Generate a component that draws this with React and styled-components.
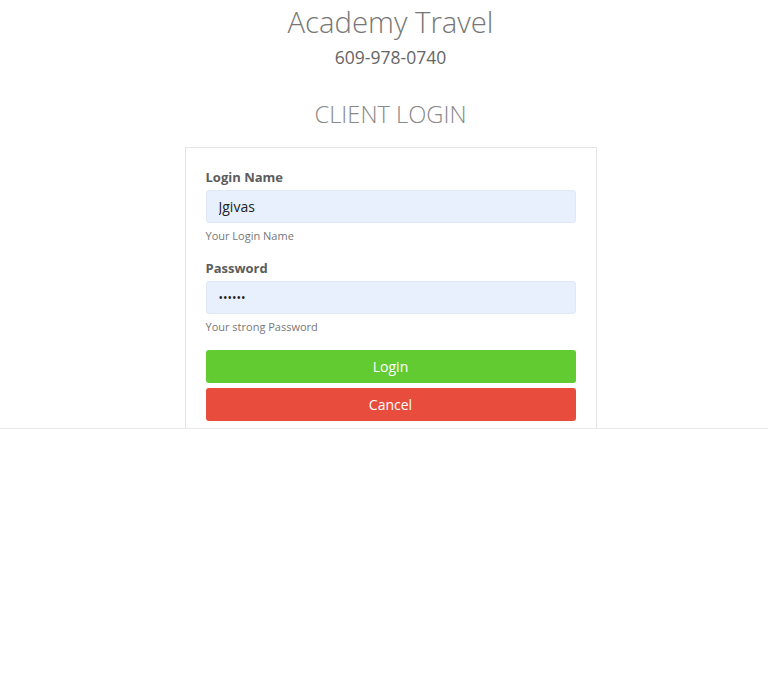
import React from 'react';
import styled, { createGlobalStyle } from 'styled-components';

const GlobalStyle = createGlobalStyle`
  html, body {
    margin: 0;
    padding: 0;
    background: #fff;
    font-family: "Open Sans", "Noto Sans", sans-serif;
  }
`

const Page = styled.div`
  width: 768px;
`

const Main = styled.div`
  height: 428px;
  overflow: hidden;
  border-bottom: 1px solid #e9e9e9;
  padding-left: 13px;
  display: flex;
  flex-direction: column;
  align-items: center;
`

const Title = styled.h1`
  margin: 2px 0 0;
  font-size: 29.3px;
  font-weight: 300;
  line-height: 40px;
  color: #777;
`

const Phone = styled.div`
  font-size: 17.5px;
  line-height: 24px;
  color: #666;
  margin-top: 3px;
`

const Heading = styled.h2`
  margin: 28px 0 0;
  font-size: 23.7px;
  font-weight: 300;
  line-height: 34px;
  color: #888;
`

const Card = styled.div`
  margin-top: 16px;
  width: 370px;
  flex-shrink: 0;
  padding: 20px 20px 30px;
  border: 1px solid #e4e5e7;
  background: #fff;
`

const Field = styled.div`
  margin-bottom: 15px;
`

const Label = styled.label`
  display: block;
  font-size: 13px;
  font-weight: 700;
  color: #5c5c5c;
  line-height: 18px;
  margin-bottom: 4px;
`

const Input = styled.input`
  box-sizing: border-box;
  width: 100%;
  height: 33px;
  border: 1px solid #e1e8f5;
  border-radius: 3px;
  background: #e8f0fe;
  padding: 0 12px;
  font-family: inherit;
  font-size: ${p => (p.type === 'password' ? '12px' : '14px')};
  color: #222;
  outline: none;
`

const Help = styled.div`
  font-size: 11px;
  line-height: 16px;
  color: #777;
  margin-top: 5px;
`

const Button = styled.button`
  display: block;
  box-sizing: border-box;
  width: 100%;
  height: 33px;
  border: none;
  border-radius: 3px;
  background: ${p => p.bg};
  color: #fff;
  font-family: inherit;
  font-size: 14px;
  margin-top: ${p => p.gap}px;
`

export default function App() {
  return (
    <Page>
      <GlobalStyle />
      <Main>
        <Title>Academy Travel</Title>
        <Phone>609-978-0740</Phone>
        <Heading>CLIENT LOGIN</Heading>
        <Card>
          <Field>
            <Label>Login Name</Label>
            <Input type="text" defaultValue="Jgivas" />
            <Help>Your Login Name</Help>
          </Field>
          <Field>
            <Label>Password</Label>
            <Input type="password" defaultValue="secret" />
            <Help>Your strong Password</Help>
          </Field>
          <Button bg="#62cb31" gap={14}>Login</Button>
          <Button bg="#e74c3c" gap={5}>Cancel</Button>
        </Card>
      </Main>
    </Page>
  );
}
